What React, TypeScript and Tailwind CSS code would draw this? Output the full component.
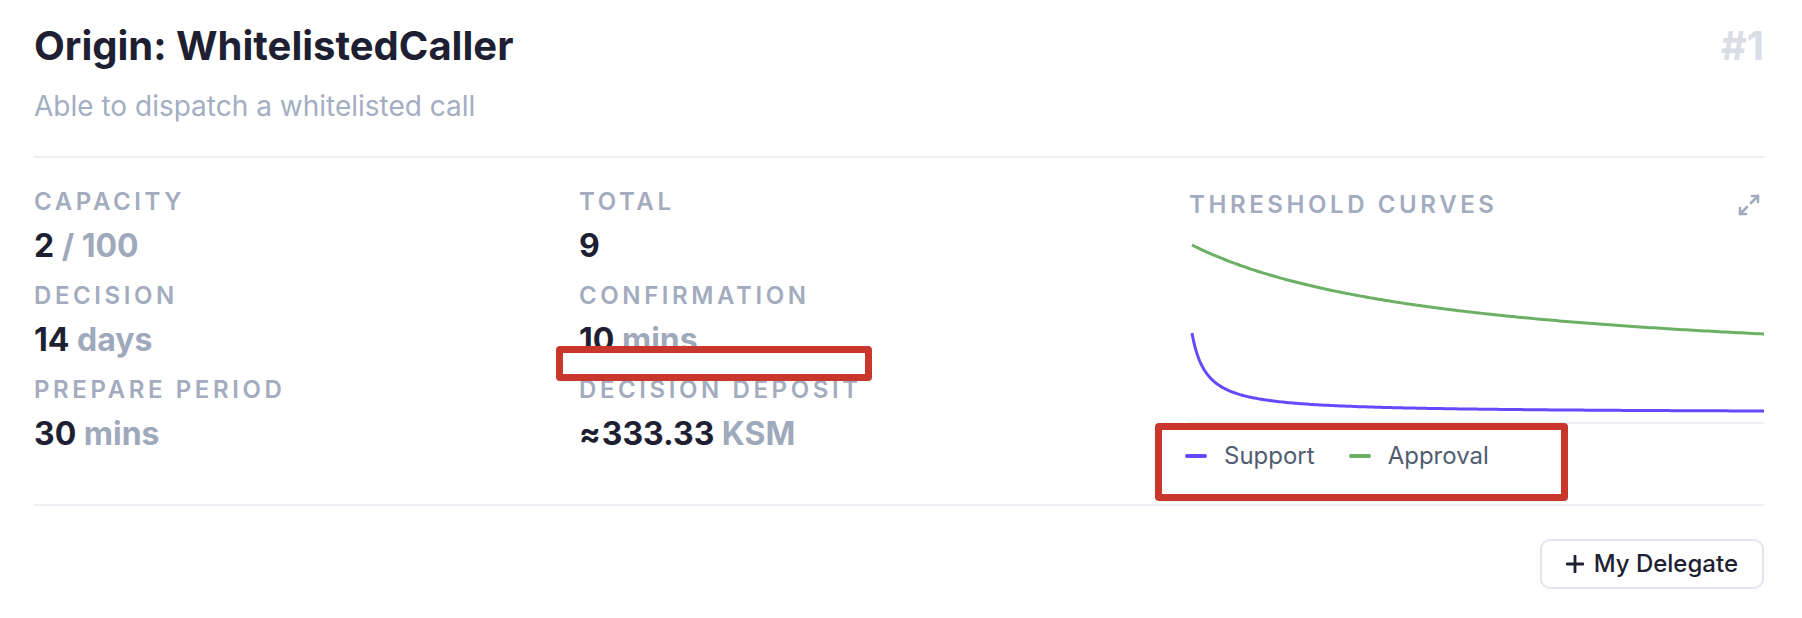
import { Maximize2 } from "lucide-react";

// reciprocal decay, normalised so f(0) = 1 and f(1) = 0
const decay = (t: number, a: number) => {
  const end = a / (1 + a);
  return (a / (t + a) - end) / (1 - end);
};

const curvePath = (x0: number, x1: number, yTop: number, yBottom: number, a: number) => {
  const pts: string[] = [];
  const n = 240;
  for (let i = 0; i <= n; i++) {
    const t = Math.pow(i / n, 1.6);
    const x = x0 + (x1 - x0) * t;
    const y = yBottom - (yBottom - yTop) * decay(t, a);
    pts.push(`${i === 0 ? "M" : "L"}${x.toFixed(2)},${y.toFixed(2)}`);
  }
  return pts.join(" ");
};

const stats = [
  [
    { label: "Capacity", value: "2", unit: "/ 100" },
    { label: "Decision", value: "14", unit: "days" },
    { label: "Prepare Period", value: "30", unit: "mins" },
  ],
  [
    { label: "Total", value: "9", unit: "" },
    { label: "Confirmation", value: "10", unit: "mins" },
    { label: "Decision Deposit", value: "333.33", unit: "KSM", approx: true },
  ],
];

function Stat({ label, value, unit, approx }: { label: string; value: string; unit: string; approx?: boolean }) {
  return (
    <div>
      <div className="text-[24px] leading-[32px] font-semibold uppercase tracking-[0.15em] text-[#a3acbe]">{label}</div>
      <div className="mt-[8px] text-[32px] leading-[40px] font-bold text-[#1e1f33]">
        {approx && <span className="mr-[1px]">≈</span>}
        {value}
        {unit && <span className="text-[#9fa9bc]"> {unit}</span>}
      </div>
    </div>
  );
}

export default function App() {
  return (
    <div className="relative w-[1802px] h-[618px] bg-white pl-[34px] pr-[38px] pt-[22px] font-['Inter',sans-serif]">
      <div className="flex justify-between items-start">
        <div>
          <h1 className="text-[40px] leading-[48px] font-bold text-[#1e1f33]">Origin: WhitelistedCaller</h1>
          <p className="mt-[18px] text-[28px] leading-[36px] text-[#a3aec2]">Able to dispatch a whitelisted call</p>
        </div>
        <div className="text-[40px] leading-[48px] font-bold text-[#d8dde6]">#1</div>
      </div>

      <div className="mt-[32px] h-[2px] bg-[#ededf3]" />

      <div className="pt-[28px] grid grid-cols-[545px_610px_575px]">
        {stats.map((col, i) => (
          <div key={i} className="flex flex-col gap-[14px]">
            {col.map((s) => (
              <Stat key={s.label} {...s} />
            ))}
          </div>
        ))}

        <div className="mt-[3px]">
          <div className="flex items-center justify-between h-[32px]">
            <span className="text-[24px] font-semibold uppercase tracking-[0.15em] text-[#a3acbe]">Threshold Curves</span>
            <Maximize2 size={24} strokeWidth={2.6} className="text-[#a3acbe] mr-[3px]" />
          </div>
          <svg width="575" height="194" viewBox="0 0 575 194" className="mt-[11px] block">
            <line x1="0" y1="191" x2="575" y2="191" stroke="#eceef3" strokeWidth="2" />
            <path d={curvePath(3, 575, 13, 102, 0.45)} fill="none" stroke="#6bb064" strokeWidth="3" />
            <path d={curvePath(3, 575, 101, 179, 0.025)} fill="none" stroke="#6848ff" strokeWidth="3" />
          </svg>
          <div className="mt-[14px] flex items-center h-[32px] -ml-[4px] text-[24px] text-[#515c70]">
            <span className="w-[22px] h-[4px] rounded-full bg-[#6848ff]" />
            <span className="ml-[17px]">Support</span>
            <span className="ml-[34px] w-[22px] h-[4px] rounded-full bg-[#6bb064]" />
            <span className="ml-[17px]">Approval</span>
          </div>
        </div>
      </div>

      <div className="mt-[32px] h-[2px] bg-[#ededf3]" />

      <div className="flex justify-end pt-[33px]">
        <button className="h-[50px] px-[24px] flex items-center gap-[10px] rounded-[10px] border-2 border-[#e2e6ee] bg-white text-[24px] font-medium text-[#1e1f33]">
          <svg width="18" height="18" viewBox="0 0 18 18">
            <path d="M9 1v16M1 9h16" stroke="#1e1f33" strokeWidth="2.8" strokeLinecap="round" />
          </svg>
          My Delegate
        </button>
      </div>

      {/* annotation boxes */}
      <div className="absolute left-[556px] top-[346px] w-[316px] h-[35px] border-[7px] border-[#c9372c] rounded-[4px] bg-white" />
      <div className="absolute left-[1155px] top-[423px] w-[413px] h-[78px] border-[7px] border-[#c9372c] rounded-[4px]" />
    </div>
  );
}
